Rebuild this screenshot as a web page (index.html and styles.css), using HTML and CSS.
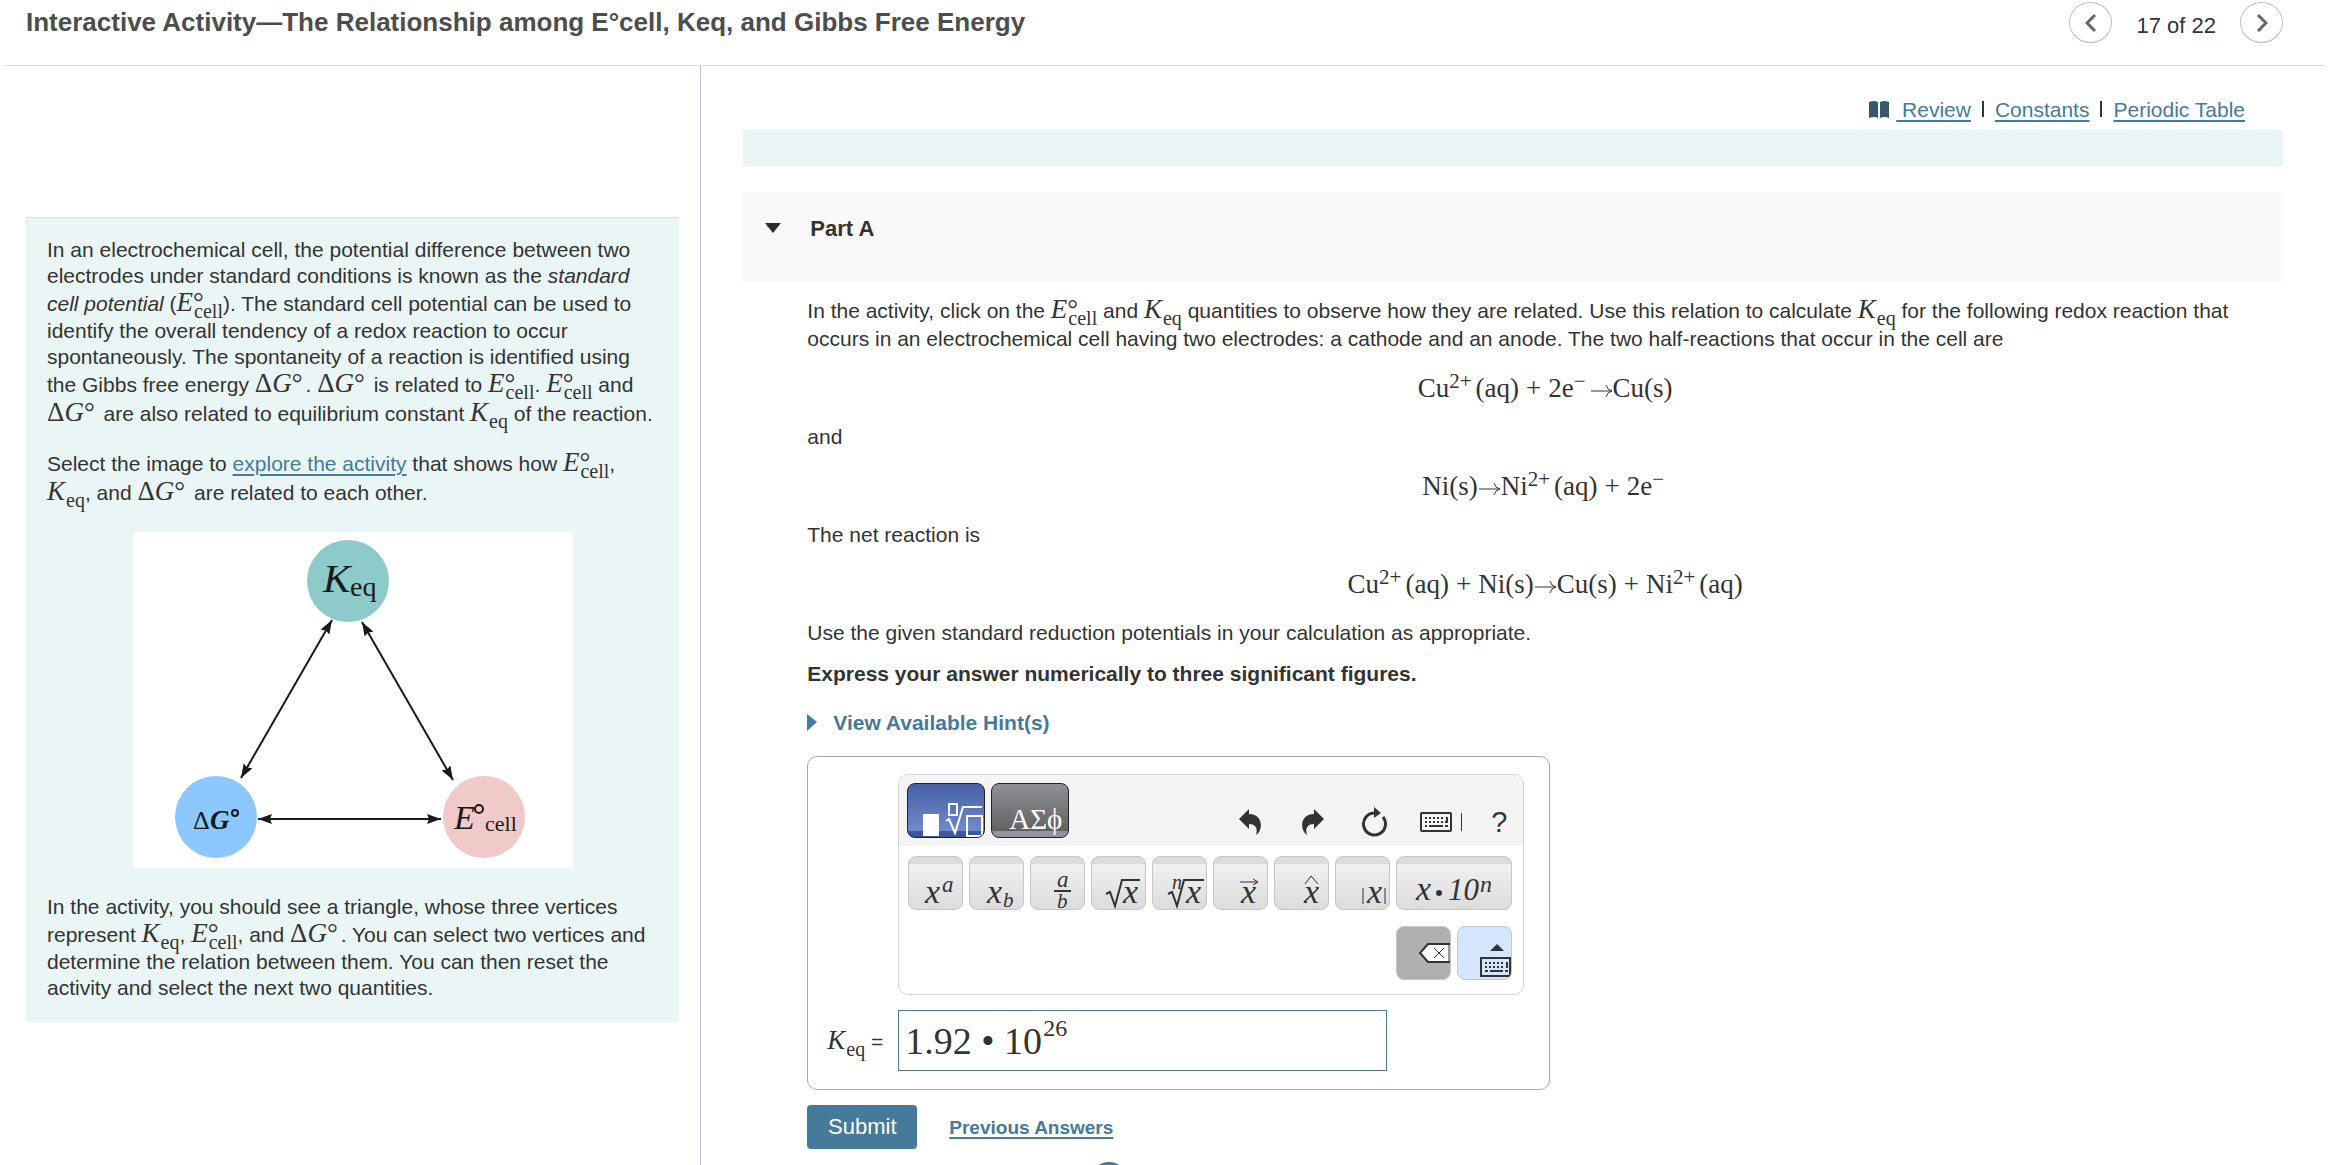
FILE: index.html
```
<!DOCTYPE html>
<html lang="en">
<head>
  <meta charset="UTF-8">
  <meta name="viewport" content="width=device-width, initial-scale=1.0">
  <title>Interactive Activity</title>
  <link rel="stylesheet" href="styles.css">
</head>
<body>
<header class="topbar">
  <h1>Interactive Activity—The Relationship among E°cell, Keq, and Gibbs Free Energy</h1>
  <nav class="pager">
    <button class="round-btn" aria-label="Previous item">
      <svg width="12" height="20" viewBox="0 0 12 20"><path d="M10 2 2 10l8 8"/></svg>
    </button>
    <span>17 of 22</span>
    <button class="round-btn" aria-label="Next item">
      <svg width="12" height="20" viewBox="0 0 12 20"><path d="m2 2 8 8-8 8"/></svg>
    </button>
  </nav>
</header>

<div class="columns">
  <aside class="side">
    <section class="intro">
      <p>In an electrochemical cell, the potential difference between two electrodes under standard conditions is known as the <em>standard cell potential</em> (<span class="math"><i>E</i><span class="over">°</span><sub>cell</sub></span>). The standard cell potential can be used to identify the overall tendency of a redox reaction to occur spontaneously. The spontaneity of a reaction is identified using the Gibbs free energy <span class="math">Δ<i>G</i><span class="deg">°</span></span>. <span class="math">Δ<i>G</i><span class="deg">°</span></span> is related to <span class="math"><i>E</i><span class="over">°</span><sub>cell</sub></span>. <span class="math"><i>E</i><span class="over">°</span><sub>cell</sub></span> and <span class="math">Δ<i>G</i><span class="deg">°</span></span> are also related to equilibrium constant <span class="math"><i>K</i><sub>eq</sub></span> of the reaction.</p>
      <p>Select the image to <a href="#activity">explore the activity</a> that shows how <span class="math"><i>E</i><span class="over">°</span><sub>cell</sub></span>, <span class="math"><i>K</i><sub>eq</sub></span>, and <span class="math">Δ<i>G</i><span class="deg">°</span></span> are related to each other.</p>
      <svg class="triangle" id="activity" width="440" height="336" viewBox="0 0 440 336">
        <defs>
          <marker id="tip" viewBox="0 0 14 10" refX="14" refY="5" markerWidth="14" markerHeight="10" markerUnits="userSpaceOnUse" orient="auto-start-reverse">
            <path d="M0 0 14 5 0 10 2 5z" fill="#1a1a1a"/>
          </marker>
        </defs>
        <rect width="440" height="336" fill="#fff"/>
        <circle cx="215" cy="49" r="41" fill="#8ccbc9"/>
        <circle cx="83" cy="285" r="41" fill="#8cc8ff"/>
        <circle cx="351" cy="285" r="41" fill="#f0cac9"/>
        <g stroke="#1a1a1a" stroke-width="2">
          <path d="M199 88 108 246" marker-start="url(#tip)" marker-end="url(#tip)"/>
          <path d="M229 90 320 248" marker-start="url(#tip)" marker-end="url(#tip)"/>
          <path d="M125 287h183" marker-start="url(#tip)" marker-end="url(#tip)"/>
        </g>
        <g class="node-text">
          <text x="190" y="60" font-size="41" font-style="italic">K</text>
          <text x="217" y="64" font-size="28">eq</text>
          <text x="60" y="297" font-size="26">Δ</text>
          <text x="77" y="297" font-size="27" font-weight="bold" font-style="italic">G</text>
          <text x="321" y="297" font-size="34" font-style="italic">E</text>
          <text x="352" y="299" font-size="22">cell</text>
        </g>
        <g fill="none" stroke="#1a1a1a" stroke-width="2">
          <circle cx="102" cy="281" r="3"/>
          <circle cx="346" cy="277" r="4"/>
        </g>
      </svg>
      <p>In the activity, you should see a triangle, whose three vertices represent <span class="math"><i>K</i><sub>eq</sub></span>, <span class="math"><i>E</i><span class="over">°</span><sub>cell</sub></span>, and <span class="math">Δ<i>G</i><span class="deg">°</span></span>. You can select two vertices and determine the relation between them. You can then reset the activity and select the next two quantities.</p>
    </section>
  </aside>

  <main class="content">
    <nav class="links">
      <svg width="20" height="17" viewBox="0 0 20 17"><path d="M0 1q5-2 9 0v16q-4-2-9 0zM11 1q4-2 9 0v16q-5-2-9 0z" fill="#345a6e"/></svg>
      <a href="#review">&nbsp;Review</a><span class="bar"></span><a href="#constants">Constants</a><span class="bar"></span><a href="#periodic">Periodic Table</a>
    </nav>
    <div class="strip"></div>

    <div class="part-head">
      <svg width="16" height="10" viewBox="0 0 16 10"><path d="M0 0h16L8 10z" fill="#2b2b2b"/></svg>
      <h2>Part A</h2>
    </div>

    <div class="question">
      <p>In the activity, click on the <span class="math"><i>E</i><span class="over">°</span><sub>cell</sub></span> and <span class="math"><i>K</i><sub>eq</sub></span> quantities to observe how they are related. Use this relation to calculate <span class="math"><i>K</i><sub>eq</sub></span> for the following redox reaction that occurs in an electrochemical cell having two electrodes: a cathode and an anode. The two half-reactions that occur in the cell are</p>
      <div class="equation">Cu<sup>2+</sup>(aq)<b>+</b>2e<sup>−</sup><svg class="arrow" viewBox="0 0 23 14"><path d="M1 7h21M16 1q1 5 6 6-5 1-6 6"/></svg>Cu(s)</div>
      <p>and</p>
      <div class="equation">Ni(s)<svg class="arrow" viewBox="0 0 23 14"><path d="M1 7h21M16 1q1 5 6 6-5 1-6 6"/></svg>Ni<sup>2+</sup>(aq)<b>+</b>2e<sup>−</sup></div>
      <p>The net reaction is</p>
      <div class="equation">Cu<sup>2+</sup>(aq)<b>+</b>Ni(s)<svg class="arrow" viewBox="0 0 23 14"><path d="M1 7h21M16 1q1 5 6 6-5 1-6 6"/></svg>Cu(s)<b>+</b>Ni<sup>2+</sup>(aq)</div>
      <p>Use the given standard reduction potentials in your calculation as appropriate.</p>
      <p class="express">Express your answer numerically to three significant figures.</p>
      <button class="hints">
        <svg width="10" height="17" viewBox="0 0 10 17"><path d="M0 0 10 8 0 17z" fill="#457a9a"/></svg>
        View Available Hint(s)
      </button>

      <form class="answer" id="answer">
        <div class="editor">
          <div class="editor-top">
            <button type="button" class="tab tab-blue" aria-label="Templates">
              <svg width="76" height="53" viewBox="1 1 76 53">
                <rect x="16" y="31" width="16" height="22" fill="#fff"/>
                <g fill="none" stroke="#fff" stroke-width="2">
                  <path d="M39 38l3-2 6 14 8-26h19"/>
                  <path d="M42 21h8v11h-8z"/>
                  <path d="M60 33h15v20H60z"/>
                </g>
              </svg>
            </button>
            <button type="button" class="tab tab-gray">ΑΣϕ</button>
            <div class="tools">
              <button type="button" class="undo" aria-label="Undo">
                <svg width="22" height="26" viewBox="0 0 22 26"><path d="M0 10 10 0v5c9 0 14 7 11 16q-1 3-4 5c2-6 0-11-7-11v5z"/></svg>
              </button>
              <button type="button" class="redo" aria-label="Redo">
                <svg width="22" height="26" viewBox="0 0 22 26"><path d="M22 10 12 0v5C3 5-2 12 1 21q1 3 4 5c-2-6 0-11 7-11v5z"/></svg>
              </button>
              <button type="button" class="reset" aria-label="Reset">
                <svg width="26" height="30" viewBox="0 0 26 30"><path d="M13 0l7 6-7 5z"/><path d="M14 6A11 11 0 1 0 22 10" fill="none" stroke="#333" stroke-width="3"/></svg>
              </button>
              <button type="button" class="kbd-tool" aria-label="Keyboard shortcuts">
                <svg width="32" height="20" viewBox="0 0 32 20"><rect x="1" y="1" width="30" height="18" rx="1" fill="none" stroke="#333" stroke-width="2"/><path d="M5 6h20M5 10h18M25 10h3" fill="none" stroke="#333" stroke-width="2" stroke-dasharray="2 2"/><path d="M27 5v6M9 14h14M5 14h2M25 14h3" fill="none" stroke="#333" stroke-width="2"/></svg>
                <i></i>
              </button>
              <button type="button" class="help">?</button>
            </div>
          </div>
          <div class="keys">
            <button type="button" class="key" aria-label="Superscript"><svg viewBox="1 1 53 52"><text x="17" y="47" font-size="34">x</text><text x="34" y="36" font-size="23">a</text></svg></button>
            <button type="button" class="key" aria-label="Subscript"><svg viewBox="1 1 53 52"><text x="18" y="47" font-size="34">x</text><text x="34" y="51" font-size="21">b</text></svg></button>
            <button type="button" class="key" aria-label="Fraction"><svg viewBox="1 1 53 52"><text x="27" y="31" font-size="23">a</text><path d="M24 35h17"/><text x="27" y="52" font-size="21">b</text></svg></button>
            <button type="button" class="key" aria-label="Square root"><svg viewBox="1 1 53 52"><path d="M15 38l4-2 5 14 7-26h18"/><text x="32" y="47" font-size="34">x</text></svg></button>
            <button type="button" class="key" aria-label="Nth root"><svg viewBox="1 1 53 52"><path d="M16 38l4-2 5 14 7-26h20"/><text x="20" y="33" font-size="20">n</text><text x="34" y="47" font-size="34">x</text></svg></button>
            <button type="button" class="key" aria-label="Vector"><svg viewBox="1 1 53 52"><path class="thin" d="M27 26h17M40 23l5 3-5 3"/><text x="28" y="47" font-size="34">x</text></svg></button>
            <button type="button" class="key" aria-label="Hat"><svg viewBox="1 1 53 52"><path class="thin" d="M31 28l6-8 7 8"/><text x="30" y="47" font-size="34">x</text></svg></button>
            <button type="button" class="key" aria-label="Absolute value"><svg viewBox="1 1 53 52"><path class="thin" d="M28 32v16M50 32v16"/><text x="32" y="47" font-size="34">x</text></svg></button>
            <button type="button" class="key key-wide" aria-label="Scientific notation"><svg viewBox="1 1 114 52"><text x="20" y="44" font-size="34">x</text><circle cx="43" cy="37" r="3"/><text x="52" y="44" font-size="31">10</text><text x="84" y="36" font-size="24">n</text></svg></button>
            <button type="button" class="key key-delete" aria-label="Delete"><svg viewBox="1 1 53 52"><path d="M54 18H32l-8 9 8 9h22"/><path class="thin" d="M38 22l10 10M48 22 38 32M53 18v18"/></svg></button>
            <button type="button" class="key key-kbd" aria-label="Toggle keyboard"><svg viewBox="1 1 53 52"><path class="solid" d="M33 25h14l-7-7z"/><path d="M24 32h29v18H24zM28 45h3M33 45h13M48 45h3M50 36v6"/><path d="M28 37h20M28 41h19" stroke-dasharray="2 2"/></svg></button>
          </div>
        </div>
        <label for="value" class="value-label"><span class="math"><i>K</i><sub>eq</sub></span> =</label>
        <div class="value-box">
          <input id="value" class="value" value="1.92 • 10">
          <input class="exponent" value="26" aria-label="Exponent">
        </div>
      </form>

      <div class="actions">
        <button class="submit" form="answer">Submit</button>
        <a href="#previous">Previous Answers</a>
      </div>
      <div class="status"></div>
    </div>
  </main>
</div>
</body>
</html>
```

FILE: styles.css
```
* {
  box-sizing: border-box;
}
body {
  margin: 0;
  height: 100vh;
  overflow: hidden;
  display: flex;
  flex-direction: column;
  font-family: "Liberation Sans", Arial, sans-serif;
  font-size: 21px;
  line-height: 27px;
  color: #333;
  background: #fff;
}
h1, h2, p {
  margin: 0;
}
button {
  font-family: inherit;
  padding: 0;
  border: none;
  background: none;
  color: inherit;
  cursor: pointer;
}
a {
  color: #457a9a;
  text-underline-offset: 3px;
  text-decoration-thickness: 2px;
}

.topbar {
  display: flex;
  justify-content: space-between;
  height: 66px;
  margin: 0 14px 0 4px;
  padding: 0 42px 0 22px;
  border-bottom: 1px solid #ddd;
}
.topbar h1 {
  font-size: 26px;
  line-height: 44px;
  color: #4d4d4d;
}
.pager {
  display: flex;
  align-items: center;
  gap: 24px;
  height: 45px;
  font-size: 22px;
}
.pager span {
  padding-top: 5px;
}
.round-btn {
  display: flex;
  align-items: center;
  justify-content: center;
  width: 43px;
  height: 41px;
  border: 1px solid #bbb;
  border-radius: 50%;
}
.round-btn path {
  fill: none;
  stroke: #666;
  stroke-width: 3;
}

.columns {
  flex: 1;
  display: flex;
  min-height: 0;
  margin: 0 14px 0 4px;
}
.side {
  flex: 0 0 30%;
  padding: 151px 21px 0 22px;
}
.intro {
  padding: 19px 20px 21px 21px;
  border-top: 1px solid #ddd;
  line-height: 26px;
  background: #eaf6f6;
}
.intro p + p {
  margin-top: 21px;
}
.triangle {
  display: block;
  margin: 25px auto 26px;
}
.node-text {
  font-family: "Liberation Serif", serif;
  fill: #1a1a1a;
}

.math {
  font-family: "Liberation Serif", "Times New Roman", serif;
  font-size: 27px;
  white-space: nowrap;
}
.math sub {
  margin-left: 1px;
  font-size: 20px;
  line-height: 14px;
  vertical-align: -7px;
}
.deg {
  margin-right: 3px;
}
.over {
  display: inline-block;
  width: 0;
}

.content {
  flex: 1;
  padding: 0 42px;
  border-left: 1px solid #b9c3dc;
}
.links {
  display: flex;
  align-items: center;
  justify-content: flex-end;
  height: 64px;
  padding: 22px 38px 0 0;
}
.links svg {
  margin-right: 7px;
}
.bar {
  width: 2px;
  height: 16px;
  margin: 0 11px;
  background: #333;
}
.strip {
  height: 36px;
  background: #eaf6f6;
}
.part-head {
  display: flex;
  align-items: center;
  gap: 29px;
  height: 90px;
  margin-top: 26px;
  padding: 0 22px 18px;
  background: #f9f9f9;
}
.part-head h2 {
  font-size: 22px;
}

.question {
  padding: 14px 0 0 64px;
}
.equation {
  height: 30px;
  margin: 21px 0 20px;
  text-align: center;
  font-family: "Liberation Serif", "Times New Roman", serif;
  font-size: 27px;
  line-height: 30px;
}
.equation sup {
  margin-right: 4px;
  font-size: 21px;
  line-height: 0;
  vertical-align: 9px;
}
.equation b {
  font-weight: normal;
  margin: 0 7px;
}
.arrow {
  width: 23px;
  height: 14px;
  vertical-align: -1px;
  fill: none;
  stroke: #333;
}
.express {
  margin-top: 14px;
  font-weight: bold;
}
.hints {
  display: flex;
  align-items: center;
  gap: 16px;
  margin-top: 22px;
  font-size: 21px;
  font-weight: bold;
  line-height: 27px;
  color: #457a9a;
}

.answer {
  display: grid;
  grid-template-columns: 71px 626px;
  gap: 14px 0;
  width: 743px;
  height: 334px;
  margin-top: 20px;
  padding: 17px 19px;
  border: 1px solid #aaa;
  border-radius: 10px;
}
.editor {
  grid-column: 2;
  height: 221px;
  border: 1px solid #d5d5d5;
  border-radius: 10px;
  overflow: hidden;
}
.editor-top {
  display: flex;
  gap: 6px;
  height: 71px;
  padding: 8px;
  background: #f4f4f4;
}
.tab {
  width: 78px;
  height: 55px;
  border: 1px solid #222;
  border-radius: 8px;
  overflow: hidden;
}
.tab svg {
  display: block;
}
.tab-blue {
  background: linear-gradient(#4760a6, #7089cb 88%, #3d589c 88%);
}
.tab-gray {
  padding: 17px 6px 0 17px;
  font-family: "Liberation Serif", serif;
  font-size: 29px;
  line-height: 30px;
  color: #fff;
  background: linear-gradient(#909196, #626262 88%, #93929d 88%);
}
.tools {
  flex: 1;
  display: flex;
  align-items: center;
  justify-content: flex-end;
  gap: 29px;
  padding: 23px 8px 0 0;
}
.tools svg {
  display: block;
  fill: #333;
}
.undo {
  margin-right: 12px;
}
.redo {
  margin-right: 8px;
}
.reset {
  margin-right: 4px;
}
.kbd-tool {
  display: flex;
  align-items: center;
  gap: 9px;
}
.kbd-tool i {
  width: 1px;
  height: 18px;
  background: #333;
}
.help {
  font-size: 29px;
  line-height: 26px;
}
.keys {
  display: flex;
  flex-wrap: wrap;
  justify-content: flex-end;
  gap: 16px 6px;
  padding: 10px 11px 0 5px;
}
.key {
  width: 55px;
  height: 54px;
  border: 1px solid #c6c6c6;
  border-radius: 8px;
  background: linear-gradient(#dcdcdc 14%, #f0f0f0 14%, #dcdcdc);
  overflow: hidden;
}
.key-wide {
  width: 116px;
}
.key-delete {
  background: #b0b0b0;
}
.key-kbd {
  background: #d3e5ff;
}
.key svg {
  display: block;
  font-family: "Liberation Serif", serif;
  font-style: italic;
  fill: #333;
}
.key path {
  fill: none;
  stroke: #333;
  stroke-width: 2;
}
.key .thin {
  stroke-width: 1;
}
.key .solid {
  fill: #333;
  stroke: none;
}
.key-delete path:first-child {
  fill: #fff;
}
.value-label {
  align-self: center;
  white-space: nowrap;
}
.value-box {
  display: flex;
  align-items: flex-start;
  width: 489px;
  height: 61px;
  padding-left: 6px;
  border: 1px solid #457a9a;
}
.value-box input {
  padding: 0;
  border: none;
  outline: none;
  background: none;
  color: #333;
  font-family: "Liberation Serif", "Times New Roman", serif;
}
.value {
  width: 138px;
  height: 59px;
  font-size: 38px;
}
.exponent {
  width: 60px;
  height: 34px;
  font-size: 24px;
}
.actions {
  display: flex;
  align-items: center;
  gap: 32px;
  margin-top: 15px;
}
.actions a {
  font-size: 19px;
  font-weight: bold;
}
.submit {
  width: 110px;
  height: 44px;
  border-radius: 4px;
  font-size: 22px;
  color: #fff;
  background: #457a9a;
}
.status {
  width: 36px;
  height: 36px;
  margin: 13px 0 0 284px;
  border-radius: 50%;
  background: #457a9a;
}
```
